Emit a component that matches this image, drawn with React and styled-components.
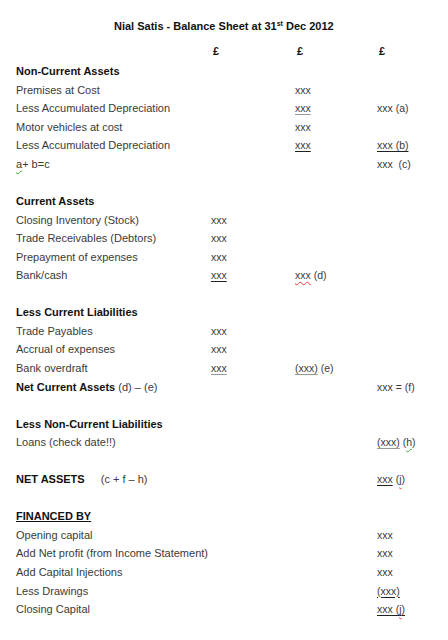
import React from "react";
import styled, { createGlobalStyle } from "styled-components";

const Global = createGlobalStyle`
  html, body { margin: 0; padding: 0; background: #fff; }
  body { font-family: "Liberation Sans", Arial, sans-serif; }
`;

const Sheet = styled.div`
  width: 448px;
  height: 640px;
  box-sizing: border-box;
  padding: 18px 0 0 16px;
  color: #3a3a3a;
  font-size: 11px;
  overflow: hidden;
`;

const Title = styled.div`
  font-weight: bold;
  color: #111;
  font-size: 11px;
  line-height: 16px;
  padding-left: 98px;
  margin-bottom: 6px;
  sup { font-size: 7px; line-height: 0; vertical-align: 4px; }
`;

const Row = styled.div`
  display: grid;
  grid-template-columns: 195px 84px 82px 1fr;
  height: ${(p) => p.$h || 18.55}px;
  align-items: center;
  white-space: nowrap;
`;

const Label = styled.span`
  font-weight: ${(p) => (p.$bold ? "bold" : "normal")};
  color: ${(p) => (p.$bold ? "#111" : "#3a3a3a")};
  text-decoration: ${(p) => (p.$under ? "underline" : "none")};
`;

const Amount = styled.span`
  grid-column: ${(p) => p.$col + 1};
  color: #3a3a3a;
  font-size: 10.5px;
`;

const U = styled.span`
  text-decoration: underline;
  text-decoration-color: ${(p) => (p.$gray ? "#999" : "#222")};
  text-underline-offset: 2px;
`;

const Wavy = styled.span`
  text-decoration: underline wavy ${(p) => p.$c};
  text-decoration-thickness: 1px;
  text-underline-offset: 2px;
`;

const Normal = styled.span`
  font-weight: normal;
  color: #3a3a3a;
  margin-left: ${(p) => p.$ml || 0}px;
`;

const Pound = styled.span`
  grid-column: ${(p) => p.$col + 1};
  font-weight: bold;
  color: #111;
  padding-left: 2px;
`;

export default function App() {
  return (
    <Sheet>
      <Global />
      <Title>
        Nial Satis - Balance Sheet at 31<sup>st</sup> Dec 2012
      </Title>
      <Row $h={22}>
        <Pound $col={1}>£</Pound>
        <Pound $col={2}>£</Pound>
        <Pound $col={3}>£</Pound>
      </Row>
      <Row>
        <Label $bold>Non-Current Assets</Label>
      </Row>
      <Row>
        <Label>Premises at Cost</Label>
        <Amount $col={2}>xxx</Amount>
      </Row>
      <Row>
        <Label>Less Accumulated Depreciation</Label>
        <Amount $col={2}><U $gray>xxx</U></Amount>
        <Amount $col={3}>xxx (a)</Amount>
      </Row>
      <Row>
        <Label>Motor vehicles at cost</Label>
        <Amount $col={2}>xxx</Amount>
      </Row>
      <Row>
        <Label>Less Accumulated Depreciation</Label>
        <Amount $col={2}><U>xxx</U></Amount>
        <Amount $col={3}><U>xxx (b)</U></Amount>
      </Row>
      <Row>
        <Label><Wavy $c="#3a3">a</Wavy>+ b=c</Label>
        <Amount $col={3}>xxx&nbsp; (c)</Amount>
      </Row>
      <Row />
      <Row>
        <Label $bold>Current Assets</Label>
      </Row>
      <Row>
        <Label>Closing Inventory (Stock)</Label>
        <Amount $col={1}>xxx</Amount>
      </Row>
      <Row>
        <Label>Trade Receivables (Debtors)</Label>
        <Amount $col={1}>xxx</Amount>
      </Row>
      <Row>
        <Label>Prepayment of expenses</Label>
        <Amount $col={1}>xxx</Amount>
      </Row>
      <Row>
        <Label>Bank/cash</Label>
        <Amount $col={1}><U>xxx</U></Amount>
        <Amount $col={2}><Wavy $c="#e33">xxx</Wavy> (d)</Amount>
      </Row>
      <Row />
      <Row>
        <Label $bold>Less Current Liabilities</Label>
      </Row>
      <Row>
        <Label>Trade Payables</Label>
        <Amount $col={1}>xxx</Amount>
      </Row>
      <Row>
        <Label>Accrual of expenses</Label>
        <Amount $col={1}>xxx</Amount>
      </Row>
      <Row>
        <Label>Bank overdraft</Label>
        <Amount $col={1}><U $gray>xxx</U></Amount>
        <Amount $col={2}><U $gray>(xxx)</U> (e)</Amount>
      </Row>
      <Row>
        <Label $bold>
          Net Current Assets <Normal>(d) – (e)</Normal>
        </Label>
        <Amount $col={3}>xxx = (f)</Amount>
      </Row>
      <Row />
      <Row>
        <Label $bold>Less Non-Current Liabilities</Label>
      </Row>
      <Row>
        <Label>Loans (check date!!)</Label>
        <Amount $col={3}><U $gray>(xxx)</U> (<Wavy $c="#3a3">h</Wavy>)</Amount>
      </Row>
      <Row />
      <Row>
        <Label $bold>
          NET ASSETS <Normal $ml={13}>(c + f – h)</Normal>
        </Label>
        <Amount $col={3}><U>xxx</U> (<Wavy $c="#e33">j</Wavy>)</Amount>
      </Row>
      <Row />
      <Row>
        <Label $bold $under>FINANCED BY</Label>
      </Row>
      <Row>
        <Label>Opening capital</Label>
        <Amount $col={3}>xxx</Amount>
      </Row>
      <Row>
        <Label>Add Net profit (from Income Statement)</Label>
        <Amount $col={3}>xxx</Amount>
      </Row>
      <Row>
        <Label>Add Capital Injections</Label>
        <Amount $col={3}>xxx</Amount>
      </Row>
      <Row>
        <Label>Less Drawings</Label>
        <Amount $col={3}><U>(xxx)</U></Amount>
      </Row>
      <Row>
        <Label>Closing Capital</Label>
        <Amount $col={3}><U>xxx (<Wavy $c="#e33">j</Wavy>)</U></Amount>
      </Row>
    </Sheet>
  );
}
